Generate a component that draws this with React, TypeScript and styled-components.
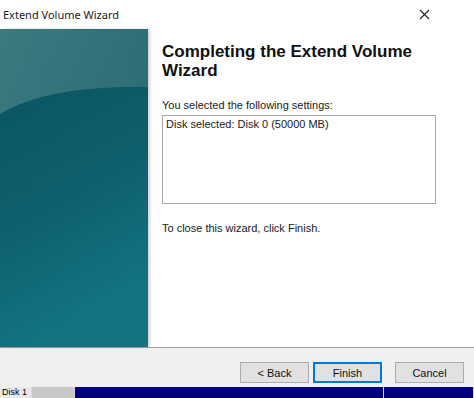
import styled, { createGlobalStyle } from 'styled-components';

const GlobalStyle = createGlobalStyle`
  html, body {
    margin: 0;
    padding: 0;
    background: #ffffff;
  }
`;

const Window = styled.div`
  width: 474px;
  height: 398px;
  display: flex;
  flex-direction: column;
  overflow: hidden;
  font-family: 'Liberation Sans', Arial, sans-serif;
  color: #000;
`;

const TitleBar = styled.div`
  height: 29px;
  flex: 0 0 29px;
  display: flex;
  align-items: center;
  justify-content: space-between;
  padding-left: 3px;
  background: #fff;
  font-family: 'Noto Sans', 'Open Sans', sans-serif;
  font-size: 11px;
  color: #1a1a1a;
`;

const CloseButton = styled.div`
  width: 46px;
  height: 29px;
  display: flex;
  align-items: center;
  justify-content: center;
  margin-right: 27px;
`;

const Body = styled.div`
  flex: 0 0 318px;
  display: flex;
  background: #fff;
`;

const SidePanel = styled.div`
  width: 148px;
  flex: 0 0 148px;
  box-shadow: 2px 0 3px rgba(0, 0, 0, 0.18);
  position: relative;
  z-index: 1;
  svg {
    display: block;
  }
`;

const Content = styled.div`
  flex: 1;
  padding: 13px 38px 0 14px;
  display: flex;
  flex-direction: column;
`;

const Heading = styled.h1`
  margin: 0;
  font-size: 17px;
  line-height: 19px;
  font-weight: bold;
  color: #111;
  width: 260px;
`;

const Label = styled.p<{ $gap: number }>`
  margin: ${p => p.$gap}px 0 0;
  font-size: 11px;
  line-height: 13px;
  color: #1a1a1a;
`;

const Settings = styled.div`
  margin-top: 3px;
  height: 83px;
  border: 1px solid #a8a8a8;
  padding: 2px 3px;
  font-size: 11px;
  line-height: 13px;
  color: #1a1a1a;
`;

const Footer = styled.div`
  flex: 0 0 40px;
  background: #f0f0f0;
  border-top: 1px solid #a0a0a0;
  display: flex;
  align-items: flex-start;
  justify-content: flex-end;
  padding: 14px 10px 0 0;
  gap: 4px;
  box-sizing: border-box;
`;

const Button = styled.button<{ $primary?: boolean; $gapLeft?: boolean }>`
  width: 69px;
  height: 21px;
  margin-left: ${p => (p.$gapLeft ? '9px' : '0')};
  background: #e1e1e1;
  border: 1px solid ${p => (p.$primary ? '#0078d7' : '#adadad')};
  box-shadow: ${p => (p.$primary ? 'inset 0 0 0 1px #0078d7' : 'none')};
  font-family: 'Liberation Sans', Arial, sans-serif;
  font-size: 11px;
  color: #111;
  padding: 0;
`;

const Taskbar = styled.div`
  flex: 1;
  display: flex;
  background: #000080;
`;

const TaskCell = styled.div<{ $width: number; $bg: string }>`
  width: ${p => p.$width}px;
  background: ${p => p.$bg};
  border-right: 1px solid #d8d8d8;
  font-size: 9px;
  line-height: 10px;
  white-space: nowrap;
  overflow: hidden;
  padding-left: 2px;
  color: #000;
`;

const Sidebar = () => (
  <svg width="148" height="318" viewBox="0 0 148 318">
    <defs>
      <linearGradient id="top" x1="0" y1="0" x2="1" y2="1">
        <stop offset="0" stopColor="#3b7a7f" />
        <stop offset="1" stopColor="#25646c" />
      </linearGradient>
      <linearGradient id="low" x1="0" y1="0" x2="0.3" y2="1">
        <stop offset="0" stopColor="#0b5663" />
        <stop offset="0.5" stopColor="#0e5f6d" />
        <stop offset="1" stopColor="#147484" />
      </linearGradient>
    </defs>
    <rect width="148" height="318" fill="url(#top)" />
    <path d="M0 85 C 35 64, 85 57, 148 58 L148 318 L0 318 Z" fill="url(#low)" />
  </svg>
);

const App = () => (
  <>
    <GlobalStyle />
    <Window>
      <TitleBar>
        <span>Extend Volume Wizard</span>
        <CloseButton>
          <svg width="11" height="11" viewBox="0 0 11 11">
            <path d="M1 1 L10 10 M10 1 L1 10" stroke="#222" strokeWidth="1.1" />
          </svg>
        </CloseButton>
      </TitleBar>
      <Body>
        <SidePanel>
          <Sidebar />
        </SidePanel>
        <Content>
          <Heading>Completing the Extend Volume Wizard</Heading>
          <Label $gap={19}>You selected the following settings:</Label>
          <Settings>Disk selected: Disk 0 (50000 MB)</Settings>
          <Label $gap={18}>To close this wizard, click Finish.</Label>
        </Content>
      </Body>
      <Footer>
        <Button>&lt; Back</Button>
        <Button $primary>Finish</Button>
        <Button $gapLeft>Cancel</Button>
      </Footer>
      <Taskbar>
        <TaskCell $width={30} $bg="#e8e8e8">Disk 1</TaskCell>
        <TaskCell $width={40} $bg="#c8c8c8" />
        <TaskCell $width={313} $bg="#000080" />
        <TaskCell $width={89} $bg="#000080" />
      </Taskbar>
    </Window>
  </>
);

export default App;
